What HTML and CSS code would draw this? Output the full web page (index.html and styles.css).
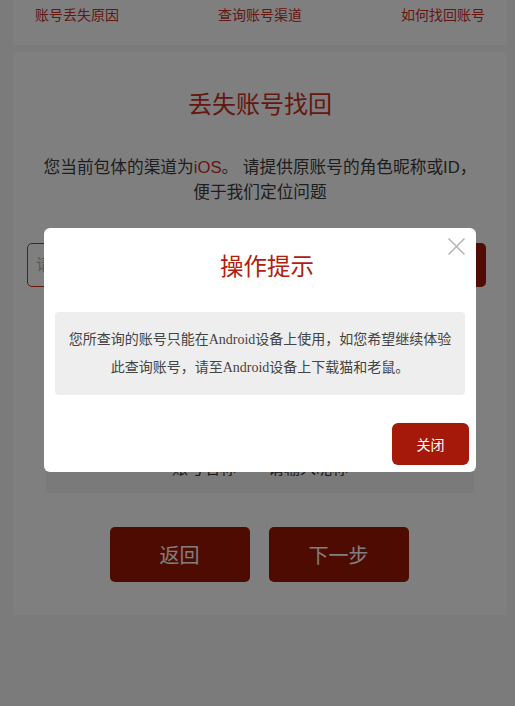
FILE: index.html
```html
<!DOCTYPE html>
<html lang="zh-CN">

<head>
    <meta charset="UTF-8">
    <meta name="viewport" content="width=device-width, initial-scale=1.0">
    <title>丢失账号找回</title>
    <link rel="stylesheet" href="styles.css">
</head>

<body>
    <nav class="tabs">
        <a href="#">账号丢失原因</a>
        <a href="#">查询账号渠道</a>
        <a href="#">如何找回账号</a>
    </nav>

    <main class="card">
        <h1 class="title">丢失账号找回</h1>
        <p class="desc">您当前包体的渠道为<span class="red">iOS</span>。 请提供原账号的角色昵称或ID，<br>便于我们定位问题</p>
        <div class="search">
            <input type="text" placeholder="请输入角色昵称或ID">
            <button>查询</button>
        </div>
        <div class="result">
            <span>账号名称</span>
            <span>请输入昵称</span>
        </div>
        <div class="actions">
            <button>返回</button>
            <button>下一步</button>
        </div>
    </main>

    <div class="mask"></div>
    <div class="dialog">
        <button class="close" aria-label="关闭">
            <svg width="17" height="17" viewBox="0 0 17 17">
                <path d="M0.5 0.5 L16.5 16.5 M16.5 0.5 L0.5 16.5" stroke="#b4b4b4" stroke-width="1.5" fill="none" />
            </svg>
        </button>
        <h2 class="dialog-title">操作提示</h2>
        <div class="dialog-text">您所查询的账号只能在Android设备上使用，如您希望继续体验此查询账号，请至Android设备上下载猫和老鼠。</div>
        <div class="dialog-foot">
            <button>关闭</button>
        </div>
    </div>
</body>

</html>
```

FILE: styles.css
```css
* {
    margin: 0;
    padding: 0;
    box-sizing: border-box;
}

body {
    height: 706px;
    background-color: #f6f6f6;
    font-family: "Liberation Sans", "Noto Sans CJK SC", sans-serif;
    color: #3c3c3c;
}

button {
    border: 0;
    font-family: inherit;
    cursor: pointer;
}

.tabs {
    margin-left: 13px;
    width: 494px;
    height: 45px;
    padding: 5px 22px 0;
    display: flex;
    justify-content: space-between;
    background-color: #fff;
    font-size: 14px;
    line-height: 20px;
}

.tabs a {
    color: #c8301f;
    text-decoration: none;
}

.card {
    margin: 7px 0 0 13px;
    width: 494px;
    padding: 37px 0 33px;
    background-color: #fff;
}

.title {
    font-size: 24px;
    line-height: 32px;
    font-weight: normal;
    text-align: center;
    color: #c8301f;
}

.desc {
    margin-top: 34px;
    font-size: 16.7px;
    line-height: 25px;
    text-align: center;
}

.red {
    color: #c8301f;
}

.search {
    margin: 38px 21px 0 14px;
    height: 44px;
    display: flex;
    gap: 6px;
}

.search input {
    flex: 1;
    border: 1px solid #c8301f;
    border-radius: 5px;
    padding: 0 8px;
    font-size: 16px;
    font-family: inherit;
}

.search input::placeholder {
    color: #b0b0b0;
}

.search button {
    width: 80px;
    border-radius: 5px;
    background-color: #a4170a;
    color: #fff;
    font-size: 16px;
}

.result {
    margin: 153px 33px 0;
    height: 53px;
    display: flex;
    justify-content: center;
    align-items: center;
    gap: 32px;
    background-color: #f4f4f4;
    font-size: 16px;
    color: #333;
}

.actions {
    margin-top: 34px;
    padding-right: 2px;
    display: flex;
    justify-content: center;
    gap: 19px;
}

.actions button {
    width: 140px;
    height: 55px;
    border-radius: 5px;
    background-color: #9c1604;
    color: #fff;
    font-size: 20px;
}

.mask {
    position: fixed;
    inset: 0;
    background-color: rgba(0, 0, 0, 0.5);
}

.dialog {
    position: fixed;
    left: 44px;
    top: 228px;
    width: 432px;
    padding: 23px 11px 7px;
    background-color: #fff;
    border-radius: 6px;
}

.close {
    position: absolute;
    top: 10px;
    right: 11px;
    width: 17px;
    height: 17px;
    background: none;
}

.close svg {
    display: block;
}

.dialog-title {
    padding-left: 14px;
    font-size: 23.5px;
    line-height: 32px;
    font-weight: normal;
    text-align: center;
    color: #b0200f;
}

.dialog-text {
    margin-top: 29px;
    padding: 14px 12px 13px;
    background-color: #eeeeee;
    border-radius: 4px;
    font-family: "Liberation Serif", "Noto Sans CJK SC", serif;
    font-size: 14px;
    line-height: 28px;
    text-align: center;
    color: #444;
}

.dialog-foot {
    margin: 28px -4px 0 0;
    display: flex;
    justify-content: flex-end;
}

.dialog-foot button {
    width: 77px;
    height: 42px;
    border-radius: 6px;
    background-color: #a5190b;
    color: #fff;
    font-size: 14px;
}
```
